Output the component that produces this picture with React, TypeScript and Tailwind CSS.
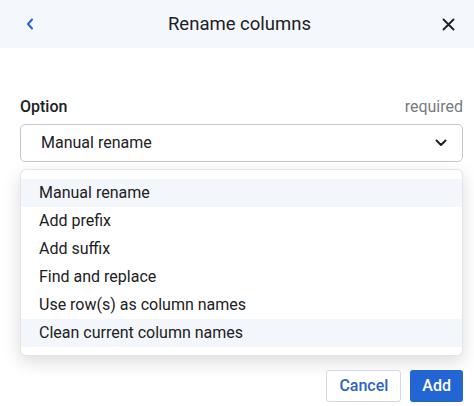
import { useState } from "react";

const options = [
  "Manual rename",
  "Add prefix",
  "Add suffix",
  "Find and replace",
  "Use row(s) as column names",
  "Clean current column names",
];

export default function App() {
  const [selected] = useState("Manual rename");
  const hovered = "Clean current column names";

  return (
    <div className="h-[406px] w-[474px] bg-white font-['Roboto',sans-serif] text-[#202124]">
      {/* Header */}
      <div className="flex h-12 items-center justify-between bg-[#f4f7fc] pl-[18px] pr-[13px]">
        <button className="flex h-6 w-6 items-center justify-center text-[#2f63c9]">
          <svg width="10" height="12" viewBox="0 0 10 12" fill="none">
            <path d="M7 1.5L3 6l4 4.5" stroke="currentColor" strokeWidth="2" strokeLinecap="round" strokeLinejoin="round" />
          </svg>
        </button>
        <h1 className="text-[18.5px] leading-6 text-[#202124]">Rename columns</h1>
        <button className="flex h-6 w-6 items-center justify-center text-[#202124]">
          <svg width="13" height="13" viewBox="0 0 13 13" fill="none">
            <path d="M1.5 1.5l10 10M11.5 1.5l-10 10" stroke="currentColor" strokeWidth="1.9" strokeLinecap="round" />
          </svg>
        </button>
      </div>

      {/* Body */}
      <div className="pl-5 pr-[11px] pt-[47px]">
        <div className="mb-[5px] flex h-6 items-center justify-between">
          <span className="text-base font-medium">Option</span>
          <span className="text-base text-[#777a7e]">required</span>
        </div>

        <div className="flex h-[38px] items-center justify-between rounded-[5px] border border-[#c4c7cc] pl-5 pr-[15px]">
          <span className="text-base">{selected}</span>
          <svg width="12" height="8" viewBox="0 0 12 8" fill="none">
            <path d="M1.5 1.5L6 6l4.5-4.5" stroke="#202124" strokeWidth="2" strokeLinecap="round" strokeLinejoin="round" />
          </svg>
        </div>

        <ul className="mt-[7px] rounded-[6px] border border-[#e3e5e8] bg-white pb-[8px] pt-[9px] shadow-[0_6px_18px_rgba(0,0,0,0.14)]">
          {options.map((opt) => (
            <li
              key={opt}
              className={
                opt === selected || opt === hovered
                  ? "flex h-7 items-center bg-[#f3f6fb] pl-[18px] text-base"
                  : "flex h-7 items-center pl-[18px] text-base"
              }
            >
              {opt}
            </li>
          ))}
        </ul>

        <div className="mt-[14px] flex justify-end gap-[9px]">
          <button className="h-8 rounded-[3px] border border-[#d3d9e2] bg-white px-[12px] text-base font-medium text-[#2d63c8]">
            Cancel
          </button>
          <button className="h-8 rounded-[3px] bg-[#2265d3] px-[12px] text-base font-medium text-white">
            Add
          </button>
        </div>
      </div>
    </div>
  );
}
